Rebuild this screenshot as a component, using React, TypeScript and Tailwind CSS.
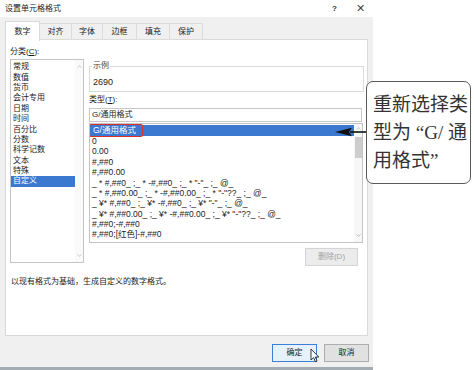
import { ChevronUp, ChevronDown } from 'lucide-react';

const categories = ['常规', '数值', '货币', '会计专用', '日期', '时间', '百分比', '分数', '科学记数', '文本', '特殊', '自定义'];

const formats = [
  '0',
  '0.00',
  '#,##0',
  '#,##0.00',
  '_ * #,##0_ ;_ * -#,##0_ ;_ * "-"_ ;_ @_',
  '_ * #,##0.00_ ;_ * -#,##0.00_ ;_ * "-"??_ ;_ @_',
  '_ ¥* #,##0_ ;_ ¥* -#,##0_ ;_ ¥* "-"_ ;_ @_',
  '_ ¥* #,##0.00_ ;_ ¥* -#,##0.00_ ;_ ¥* "-"??_ ;_ @_',
  '#,##0;-#,##0',
  '#,##0;[红色]-#,##0',
];

const tabs = [
  { label: '数字', w: 'w-[35px]' },
  { label: '对齐', w: 'w-[32px]' },
  { label: '字体', w: 'w-[31px]' },
  { label: '边框', w: 'w-[34px]' },
  { label: '填充', w: 'w-[33px]' },
  { label: '保护', w: 'w-[33px]' },
];

export default function App() {
  return (
    <div className="relative w-[474px] h-[370px] bg-white overflow-hidden text-[#1a1a1a] font-['Liberation_Sans','Noto_Sans_CJK_SC',sans-serif]">
      <div className="w-[373px] h-[370px] flex flex-col bg-[#f0f0f0]">
        {/* title bar */}
        <div className="h-[17px] bg-white flex items-center pl-[5px] text-[8px] leading-none">
          <span>设置单元格格式</span>
          <span className="ml-auto mr-[19px] text-[8px] font-bold text-[#333]">?</span>
          <span className="mr-[8px] text-[11px] text-[#444]">✕</span>
        </div>

        <div className="flex-1 flex flex-col px-[5px] pt-[4px]">
          {/* tabs */}
          <div className="h-[19px] flex text-[8px]">
            {tabs.map((t, i) => (
              <div
                key={t.label}
                className={`${t.w} flex items-center justify-center ${
                  i === 0
                    ? 'bg-white border-t border-x border-[#d9d9d9] h-[20px] relative z-10'
                    : 'bg-[#f0f0f0] border-t border-r border-[#dcdcdc] mt-[2px] border-b'
                }`}
              >
                {t.label}
              </div>
            ))}
            <div className="flex-1 border-b border-[#d9d9d9]" />
          </div>

          {/* panel */}
          <div className="h-[296px] bg-white border border-t-0 border-[#d9d9d9] flex flex-col text-[8px] leading-none">
            <div className="flex pl-[4px] pt-[8px]">
              {/* category column */}
              <div className="w-[74px] flex flex-col">
                <div className="h-[10px]">分类(<span className="underline">C</span>):</div>
                <div className="mt-[1px] h-[204px] border border-[#c4c4c4] flex">
                  <div className="flex-1 pt-[2px]">
                    {categories.map(c => (
                      <div
                        key={c}
                        className={`h-[10.4px] flex items-center pl-[2px] ${c === '自定义' ? 'bg-[#3b78d0] text-white' : ''}`}
                      >
                        {c}
                      </div>
                    ))}
                  </div>
                  <div className="w-[8px] flex flex-col items-center justify-between py-[3px] bg-[#fafafa]">
                    <ChevronUp size={7} strokeWidth={2} className="text-[#a8a8a8]" />
                    <ChevronDown size={7} strokeWidth={2} className="text-[#a8a8a8]" />
                  </div>
                </div>
              </div>

              {/* type column */}
              <div className="ml-[5px] w-[275px] flex flex-col">
                <div className="relative mt-[18px] h-[26px] border border-[#dcdcdc] pl-[3px] pt-[11px]">
                  <span className="absolute -top-[5px] left-[2px] bg-white px-[1px] text-[#444]">示例</span>
                  <span className="text-[9px]">2690</span>
                </div>
                <div className="mt-[4px] h-[10px]">类型(<span className="underline">T</span>):</div>
                <div className="mt-[2px] h-[14px] border border-[#c8c8c8] flex items-center pl-[2px] mr-[2px]">G/通用格式</div>
                <div className="mt-[1px] h-[120px] border border-[#c4c4c4] flex mr-[1px]">
                  <div className="flex-1 pt-[1px] overflow-hidden text-[8.5px]">
                    <div className="h-[11px] flex items-center bg-[#3b78d0] text-white">
                      <span className="h-[13px] pl-[3px] pr-[6px] flex items-center border-[1.5px] border-[#d9312e] rounded-[2px] -ml-[1px]">
                        G/通用格式
                      </span>
                    </div>
                    {formats.map(f => (
                      <div key={f} className="h-[10.4px] flex items-center pl-[2px] whitespace-pre text-[#222]">
                        {f}
                      </div>
                    ))}
                  </div>
                  <div className="w-[8px] flex flex-col items-center bg-[#f7f7f7] py-[1px]">
                    <ChevronUp size={7} strokeWidth={2} className="text-[#a8a8a8]" />
                    <div className="mt-[5px] w-[7px] h-[21px] bg-[#cdcdcd]" />
                    <div className="flex-1" />
                    <ChevronDown size={7} strokeWidth={2} className="text-[#8a8a8a] mb-[2px]" />
                  </div>
                </div>
                <div className="self-end mr-[6px] mt-[5px] w-[53px] h-[18px] bg-[#ececec] border border-[#d4d4d4] flex items-center justify-center text-[#a2a2a2]">
                  删除(D)
                </div>
              </div>
            </div>
            <div className="mt-[12px] pl-[5px]">以现有格式为基础，生成自定义的数字格式。</div>
          </div>

          {/* buttons */}
          <div className="mt-[8px] flex justify-end gap-[7px] text-[8px]">
            <div className="w-[45px] h-[18px] bg-[#e5f1fb] border border-[#3c7fd6] flex items-center justify-center">确定</div>
            <div className="w-[45px] h-[18px] bg-[#e1e1e1] border border-[#adadad] flex items-center justify-center -mr-[1px]">取消</div>
          </div>
          <div className="flex-1" />
        </div>
        <div className="h-[3px] bg-[#a3abb3]" />
      </div>

      {/* mouse cursor */}
      <svg className="absolute left-[310px] top-[348px]" width="10" height="15" viewBox="0 0 10 15">
        <path d="M1 1 L1 12 L3.6 9.6 L5.4 13.8 L7 13.1 L5.3 9 L8.8 9 Z" fill="white" stroke="#222" strokeWidth="0.9" strokeLinejoin="round" />
      </svg>

      {/* arrow */}
      <svg className="absolute left-[334px] top-[126px]" width="34" height="12" viewBox="0 0 34 12">
        <path d="M16 6 L33 6" stroke="#111" strokeWidth="1.6" />
        <path d="M1 6 L18 1.8 L15 6 L18 10.2 Z" fill="#111" />
      </svg>

      {/* callout */}
      <div className="absolute left-[366px] top-[81px] w-[105px] h-[103px] bg-white border border-[#5a5a5a] rounded-[7px] pl-[6px] pt-[9px] text-[19px] leading-[28px] text-[#333] font-['Liberation_Serif','Noto_Sans_CJK_SC',serif]">
        <div>重新选择类</div>
        <div className="whitespace-nowrap">型为 “G/ 通</div>
        <div>用格式”</div>
      </div>
    </div>
  );
}
